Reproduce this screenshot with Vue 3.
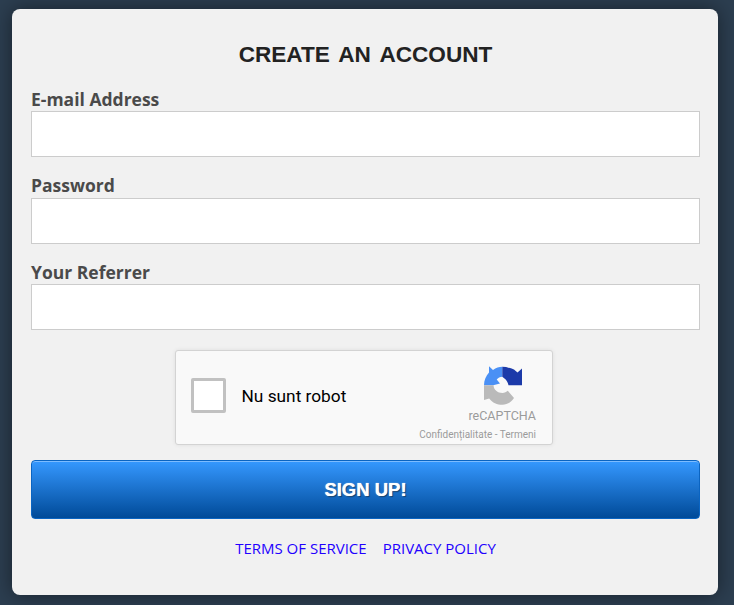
<template>
  <div class="page">
    <form class="card" @submit.prevent>
      <h1 class="title">CREATE AN ACCOUNT</h1>

      <div v-for="field in fields" :key="field.label" class="field">
        <label class="field-label">{{ field.label }}</label>
        <input class="field-input" :type="field.type" />
      </div>

      <!-- captcha -->
      <div class="captcha">
        <span class="captcha-box"></span>
        <span class="captcha-text">Nu sunt robot</span>
        <div class="captcha-brand">
          <svg class="captcha-logo" viewBox="0 0 40 40" width="40" height="40">
            <path fill="#4a90f5" d="M1 19.3C1 14 3 10 6 6.6V.2L10 4C13 2 16 .8 19.3 .8V10.8C17 10.9 15 12 13.7 13.5L17 17.5L10.2 19.3Z" />
            <path fill="#1c3aa9" d="M19.3 .8C23 .8 27 2 31 3.5L34.5 6.5L39 2.5V19.3H25.5C25 16.5 23.5 14 21.5 12.5L19.3 10.8Z" />
            <path fill="#bababa" d="M1 19.3H10.5C10.8 24 14.5 27 19.5 27C21.5 27 23.5 26 24.8 24.8L31 32C28 36.5 24 38.8 19.5 38.8C14 38.8 9.5 36.8 6.2 32.5L1 34Z" />
          </svg>
          <div class="captcha-name">reCAPTCHA</div>
          <div class="captcha-links">Confidențialitate - Termeni</div>
        </div>
      </div>

      <button class="signup" type="submit">SIGN UP!</button>

      <div class="links">
        <a href="#">TERMS OF SERVICE</a>
        <a href="#">PRIVACY POLICY</a>
      </div>
    </form>
  </div>
</template>

<script setup>
const fields = [
  { label: 'E-mail Address', type: 'email' },
  { label: 'Password', type: 'password' },
  { label: 'Your Referrer', type: 'text' },
]
</script>

<style>
html, body { margin: 0; background: #2c3e50; }
</style>

<style scoped>
.page { width: 734px; height: 605px; padding: 9px 16px 10px 12px; box-sizing: border-box; background: #2c3e50; overflow: hidden; }
.card { height: 586px; box-sizing: border-box; padding: 30px 18px 0 19px; background: #f1f1f1; border-radius: 8px; box-shadow: 0 0 20px rgba(0, 0, 0, .45); font-family: "Open Sans", sans-serif; }

.title { margin: 0 0 15.6px; height: 32px; text-align: center; font: bold 22.6px/32px "Liberation Sans", Arial, sans-serif; word-spacing: 3px; color: #222; }

.field { margin-bottom: 16px; }
.field-label { display: block; height: 24.5px; line-height: 25.5px; font-size: 17.5px; font-weight: 700; color: #4a4a4a; }
.field-input { display: block; width: 100%; height: 46px; box-sizing: border-box; border: 1px solid #ccc; background: #fff; outline: none; }

.captcha { display: flex; width: 378px; height: 95px; margin: 20px 0 15px 144px; box-sizing: border-box; padding-left: 15px; align-items: center; background: #f9f9f9; border: 1px solid #d3d3d3; border-radius: 3px; box-shadow: 0 0 4px rgba(0, 0, 0, .08); font-family: Roboto, sans-serif; }
.captcha-box { width: 35px; height: 35px; margin-bottom: 5px; box-sizing: border-box; background: #fff; border: 3px solid #c1c1c1; border-radius: 2px; }
.captcha-text { margin: 0 0 4px 15.5px; font-size: 17.3px; color: #000; }
.captcha-brand { margin-left: auto; padding: 15px 16px 0 0; height: 100%; box-sizing: border-box; display: flex; flex-direction: column; align-items: flex-end; }
.captcha-logo { display: block; margin-right: 13px; }
.captcha-name { margin-top: 1px; font-size: 12.5px; line-height: 18px; color: #9b9b9b; }
.captcha-links { margin-top: 3px; font-size: 10px; line-height: 14px; color: #9b9b9b; white-space: nowrap; }

.signup { display: block; width: 100%; height: 59px; padding: 0; border: 1px solid #0a64c2; border-radius: 4px; background: linear-gradient(#3598ff, #004a98); box-shadow: inset 0 1px 0 #7dbcff; color: #fff; font: bold 18.5px "Liberation Sans", Arial, sans-serif; text-shadow: 0 0 1px #fff, 1px 1px 1px rgba(0, 0, 0, .5); }

.links { display: flex; justify-content: center; gap: 16px; margin-top: 19px; font-size: 15px; line-height: 20px; }
.links a { color: #2200ff; text-decoration: none; }
</style>
